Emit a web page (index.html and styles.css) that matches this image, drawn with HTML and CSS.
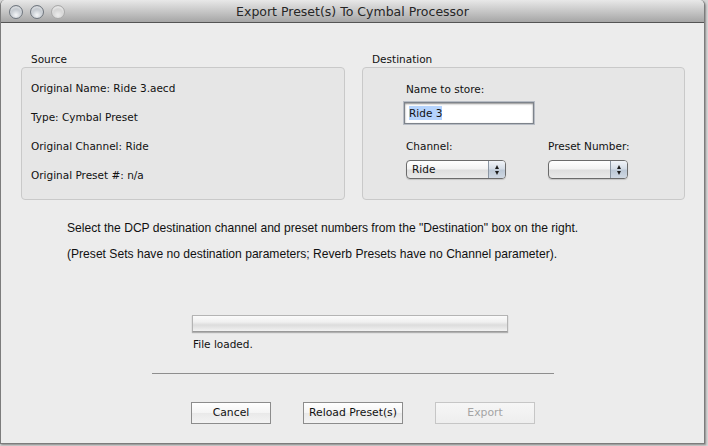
FILE: index.html
```html
<!DOCTYPE html>
<html>
<head>
<meta charset="utf-8">
<link rel="stylesheet" href="styles.css">
</head>
<body>
<div class="window">
  <div class="titlebar">
    <div class="lights">
      <span class="light"></span>
      <span class="light"></span>
      <span class="light off"></span>
    </div>
    <div class="title">Export Preset(s) To Cymbal Processor</div>
  </div>
  <div class="content">
    <div class="groups">
      <div class="group source">
        <div class="group-label">Source</div>
        <div class="box source-box">
          <div class="line">Original Name: Ride 3.aecd</div>
          <div class="line">Type: Cymbal Preset</div>
          <div class="line">Original Channel: Ride</div>
          <div class="line">Original Preset #: n/a</div>
        </div>
      </div>
      <div class="group dest">
        <div class="group-label">Destination</div>
        <div class="box dest-box">
          <div class="field-label">Name to store:</div>
          <div class="textfield"><span class="sel">Ride 3</span></div>
          <div class="selects">
            <div class="col col-channel">
              <div class="field-label">Channel:</div>
              <div class="popup"><span class="popup-text">Ride</span><span class="stepper"><span class="up"></span><span class="down"></span></span></div>
            </div>
            <div class="col col-preset">
              <div class="field-label">Preset Number:</div>
              <div class="popup"><span class="popup-text"></span><span class="stepper"><span class="up"></span><span class="down"></span></span></div>
            </div>
          </div>
        </div>
      </div>
    </div>
    <div class="info">
      <p>Select the DCP destination channel and preset numbers from the "Destination" box on the right.</p>
      <p>(Preset Sets have no destination parameters; Reverb Presets have no Channel parameter).</p>
    </div>
    <div class="progress"></div>
    <div class="status">File loaded.</div>
    <div class="separator"></div>
    <div class="buttons">
      <div class="btn btn-cancel">Cancel</div>
      <div class="btn btn-reload">Reload Preset(s)</div>
      <div class="btn btn-export disabled">Export</div>
    </div>
  </div>
</div>
</body>
</html>
```

FILE: styles.css
```css
* { box-sizing: border-box; }
html, body {
  margin: 0;
  padding: 0;
  width: 708px;
  height: 446px;
  background: #d6d6d6;
  overflow: hidden;
}
body {
  font-family: "DejaVu Sans", "Noto Sans", sans-serif;
  font-size: 10.5px;
  color: #111;
}
.window {
  width: 705px;
  height: 444px;
  border: 1px solid #7c7c7c;
  border-top: none;
  border-radius: 5px 5px 0 0;
  background: #ececec;
  display: flex;
  flex-direction: column;
  box-shadow: 1px 1px 2px rgba(0,0,0,0.35);
  overflow: hidden;
}
.titlebar {
  height: 23px;
  flex: none;
  border-bottom: 1px solid #545454;
  background: linear-gradient(#e8e8e8, #c4c4c4 55%, #a6a6a6);
  display: flex;
  align-items: center;
  position: relative;
  border-radius: 5px 5px 0 0;
}
.lights {
  display: flex;
  gap: 7px;
  margin-left: 8px;
  margin-top: 1px;
}
.light {
  width: 14px;
  height: 14px;
  border-radius: 50%;
  background: radial-gradient(circle at 50% 75%, #f4f6f8 0%, #c9ced4 45%, #8d959e 100%);
  border: 1px solid #6f767e;
  box-shadow: inset 0 2px 2px rgba(255,255,255,0.6);
}
.light.off {
  background: radial-gradient(circle at 50% 75%, #ececec 0%, #d4d4d4 50%, #bdbdbd 100%);
  border-color: #a9a9a9;
}
.title {
  position: absolute;
  left: 0;
  right: 0;
  top: 4px;
  text-align: center;
  font-size: 12.5px;
  color: #262626;
  line-height: 15px;
}
.content {
  flex: 1;
  display: flex;
  flex-direction: column;
}
.groups {
  display: flex;
  gap: 17px;
  padding-top: 30px;
  padding-left: 20px;
}
.group-label {
  line-height: 13px;
  padding-left: 10px;
  margin-bottom: 1px;
}
.box {
  height: 133px;
  border: 1px solid #c9c9c9;
  border-radius: 4px;
  background: #e6e6e6;
}
.source .box { width: 324px; }
.dest .box { width: 323px; }
.source-box {
  padding: 13px 0 0 9px;
  display: flex;
  flex-direction: column;
  gap: 15px;
}
.line { line-height: 14px; }
.dest-box {
  padding: 14px 0 0 43px;
}
.field-label { line-height: 14px; }
.textfield {
  width: 130px;
  height: 22px;
  margin-left: -2px;
  margin-top: 6px;
  background: #fff;
  border: 1px solid #7d838b;
  box-shadow: 0 0 0 1px #b7bcc4, inset 0 1px 2px rgba(0,0,0,0.45);
  padding: 3px 0 0 4px;
  line-height: 14px;
}
.sel {
  background: #b5d3fc;
  padding: 1px 0;
}
.selects {
  display: flex;
  gap: 42px;
  margin-top: 15px;
}
.col-channel .popup { width: 100px; }
.col-preset .popup { width: 80px; }
.popup {
  margin-top: 7px;
  height: 19px;
  border: 1px solid #6b6b6b;
  border-radius: 4px;
  background: linear-gradient(#ffffff, #f3f3f3 45%, #dedede 55%, #eaeaea);
  display: flex;
  box-shadow: 0 1px 1px rgba(0,0,0,0.15);
  overflow: hidden;
}
.popup-text {
  flex: 1;
  padding-left: 5px;
  line-height: 17px;
}
.stepper {
  width: 17px;
  border-left: 1px solid #8b96a3;
  background: linear-gradient(#f1f4f8, #d5dde7 45%, #bcc8d6 55%, #cfd8e3);
  display: flex;
  flex-direction: column;
  align-items: center;
  justify-content: center;
  gap: 2px;
}
.up, .down {
  width: 0;
  height: 0;
  border-left: 2.5px solid transparent;
  border-right: 2.5px solid transparent;
}
.up { border-bottom: 4px solid #1c1c1c; }
.down { border-top: 4px solid #1c1c1c; }
.info {
  margin-top: 21px;
  padding-left: 66px;
  font-family: "Liberation Sans", Arial, sans-serif;
  font-size: 12.1px;
  color: #111;
}
.info p {
  margin: 0;
  line-height: 14px;
}
.info p + p {
  margin-top: 12px;
}
.progress {
  margin-top: 54px;
  margin-left: 191px;
  width: 316px;
  height: 17px;
  border: 1px solid #b4b4b4;
  border-bottom-color: #9a9a9a;
  background: linear-gradient(#fbfbfb, #f0f0f0 40%, #dcdcdc 60%, #f2f2f2);
  box-shadow: 0 1px 1px rgba(0,0,0,0.25);
}
.status {
  margin-top: 5px;
  margin-left: 192px;
  line-height: 14px;
}
.separator {
  margin-top: 22px;
  margin-left: 151px;
  width: 402px;
  height: 1px;
  background: #8e8e8e;
}
.buttons {
  margin-top: 28px;
  margin-left: 190px;
  display: flex;
  gap: 32px;
}
.btn {
  height: 22px;
  border: 1px solid #8c8c8c;
  background: linear-gradient(#ffffff, #f4f4f4 50%, #e9e9e9 51%, #f3f3f3);
  text-align: center;
  line-height: 20px;
  font-size: 10.8px;
  color: #111;
}
.btn-cancel { width: 80px; }
.btn-reload { width: 100px; }
.btn-export { width: 100px; }
.btn.disabled {
  border-color: #c6c6c6;
  color: #a4a4a4;
  background: linear-gradient(#f6f6f6, #eeeeee);
}
```
